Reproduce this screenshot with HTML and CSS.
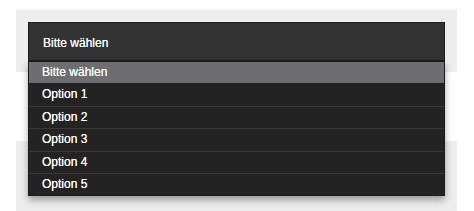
FILE: index.html
```html
<!DOCTYPE html>
<html lang="de">
<head>
<meta charset="utf-8">
<title>Select</title>
<link rel="stylesheet" href="styles.css">
</head>
<body>
<div class="panel panel-top">
  <div class="select">
    <div class="select-box">Bitte wählen</div>
    <ul class="menu">
      <li class="item active">Bitte wählen</li>
      <li class="item">Option 1</li>
      <li class="item">Option 2</li>
      <li class="item">Option 3</li>
      <li class="item">Option 4</li>
      <li class="item">Option 5</li>
    </ul>
  </div>
</div>
<div class="panel panel-bottom"></div>
</body>
</html>
```
FILE: styles.css
```css
html, body {
  margin: 0;
  padding: 0;
  background: #fff;
  font-family: "Liberation Sans", Arial, sans-serif;
}
.panel {
  background: #ededed;
  margin-left: 16px;
  width: 441px;
  box-sizing: border-box;
}
.panel-top {
  margin-top: 10px;
  height: 62px;
  padding: 12px 12px 0 12px;
}
.panel-bottom {
  margin-top: 69px;
  height: 70px;
}
.select {
  position: relative;
}
.select-box {
  height: 39px;
  box-sizing: border-box;
  background: #333333;
  border: 1px solid #1c1c1c;
  color: #fff;
  font-size: 12px;
  line-height: 33px;
  padding: 4px 0 0 14px;
  text-shadow: 0 0 0.4px #fff;
}
.menu {
  position: absolute;
  top: 39px;
  left: 0;
  right: 0;
  margin: 0;
  padding: 0;
  list-style: none;
  background: #232323;
  border: 1px solid #1a1a1a;
  box-shadow: 0 4px 7px rgba(0, 0, 0, 0.35);
  z-index: 2;
}
.item {
  height: 21.4px;
  line-height: 21.4px;
  border-bottom: 1px solid #3a3a3a;
  color: #fff;
  font-size: 12px;
  padding-left: 13px;
  text-shadow: 0 0 0.4px #fff;
}
.item:last-child {
  border-bottom: 0;
}
.item.active {
  background: #6e6d72;
  border-bottom-color: #232323;
}
```
